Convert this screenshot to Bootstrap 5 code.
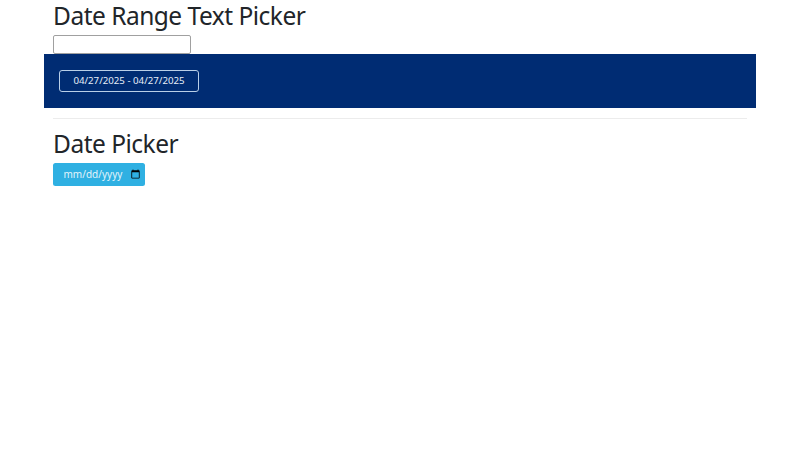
<!DOCTYPE html>
<html lang="en">
<head>
<meta charset="utf-8">
<title>Date Pickers</title>
<link href="https://cdn.jsdelivr.net/npm/bootstrap@5.3.0/dist/css/bootstrap.min.css" rel="stylesheet">
<style>
body { font-family: "Noto Sans", "Open Sans", sans-serif; }
.page-wrap { width: 712px; margin-left: 44px; }
.inner-block { padding: 0 9px; }
.heading-text { font-family: "Noto Sans", sans-serif; font-size: 24.5px; line-height: 31px; height: 35px; font-weight: 400; letter-spacing: -0.5px; margin: 0; color: #212529; }
.date-head { margin-top: 9px; }
.plain-input { display: block; width: 138px; height: 19px; padding: 0; border: 1px solid #a0a0a0; border-radius: 2px; background: #fff; }
.blue-band { background: #002c73; height: 53.5px; padding: 15.5px 15px; }
.range-btn { display: block; width: 140px; height: 22px; padding: 0; font-size: 9.7px; line-height: 20px; font-weight: 400; color: #e6eef7; background: transparent; border: 1px solid #b9cfe8; border-radius: 3px; text-align: center; }
.sep-line { margin: 10px 9px 0; border: 0; border-top: 1px solid #ececec; opacity: 1; }
.date-field { display: block; width: 92px; height: 23px; padding: 0 4px 0 10.5px; border: 0; border-radius: 2.5px; background: #2fb0e2; color: #e3f4fb; font-family: "Noto Sans", sans-serif; font-size: 10px; }
.date-field::-webkit-calendar-picker-indicator { margin: 0; padding: 0; width: 11px; height: 11px; }
</style>
</head>
<body>
<div class="page-wrap">
  <div class="inner-block">
    <h1 class="heading-text">Date Range Text Picker</h1>
    <input type="text" class="plain-input" aria-label="Date range">
  </div>
  <div class="blue-band">
    <button type="button" class="range-btn">04/27/2025 - 04/27/2025</button>
  </div>
  <hr class="sep-line">
  <div class="inner-block">
    <h1 class="heading-text date-head">Date Picker</h1>
    <input type="date" class="date-field" aria-label="Date">
  </div>
</div>
<script src="https://cdn.jsdelivr.net/npm/bootstrap@5.3.0/dist/js/bootstrap.bundle.min.js"></script>
</body>
</html>
